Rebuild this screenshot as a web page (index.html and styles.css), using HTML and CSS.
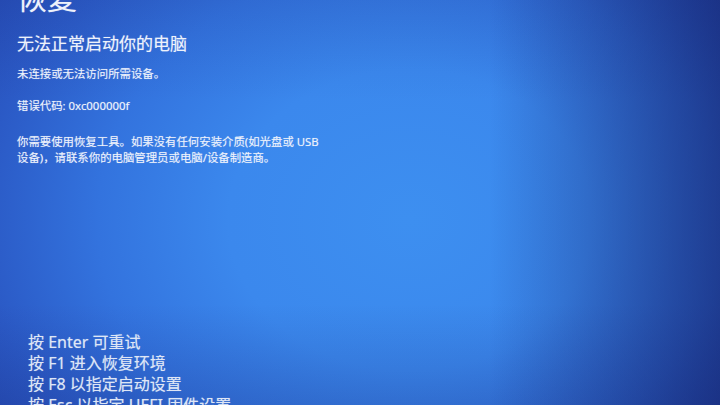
FILE: index.html
```html
<!DOCTYPE html>
<html lang="zh-CN">
<head>
<meta charset="utf-8">
<title>恢复</title>
<link rel="stylesheet" href="styles.css">
</head>
<body>
<main class="screen">
  <section class="info">
    <h1 class="title">恢复</h1>
    <h2 class="subtitle">无法正常启动你的电脑</h2>
    <p class="line">未连接或无法访问所需设备。</p>
    <p class="line code">错误代码: 0xc000000f</p>
    <p class="line para">你需要使用恢复工具。如果没有任何安装介质(如光盘或 USB<br>设备)，请联系你的电脑管理员或电脑/设备制造商。</p>
  </section>
  <ul class="keys">
    <li>按 Enter 可重试</li>
    <li>按 F1 进入恢复环境</li>
    <li>按 F8 以指定启动设置</li>
    <li>按 Esc 以指定 UEFI 固件设置</li>
  </ul>
</main>
</body>
</html>
```

FILE: styles.css
```css
html, body {
  margin: 0;
  padding: 0;
}
body {
  width: 720px;
  height: 405px;
  overflow: hidden;
  font-family: "Segoe UI", "Noto Sans", "Noto Sans CJK SC", sans-serif;
  color: #eef2fb;
  background:
    linear-gradient(to right, rgba(18, 28, 100, 0) 68%, rgba(18, 28, 100, 0.62) 100%),
    linear-gradient(to bottom, rgba(20, 30, 110, 0.1) 0%, rgba(20, 30, 110, 0) 25%, rgba(20, 30, 110, 0) 75%, rgba(20, 30, 110, 0.2) 100%),
    radial-gradient(ellipse 520px 430px at 410px 220px, #3d8ff0 0%, #3b88ed 35%, #3373de 60%, #2b5ac6 82%, #2549b2 100%);
  background-color: #2549b2;
}
.screen {
  display: flex;
  flex-direction: column;
  height: 405px;
  text-shadow: 0 0 1px rgba(230, 240, 255, 0.5);
}
.info {
  padding-left: 17px;
  display: flex;
  flex-direction: column;
}
.title {
  margin: -17px 0 0;
  font-size: 30px;
  line-height: 30px;
  font-weight: 400;
}
.subtitle {
  margin: 20px 0 0;
  font-size: 17px;
  line-height: 22px;
  font-weight: 400;
}
.line {
  margin: 11px 0 0;
  font-size: 11.4px;
  line-height: 16px;
}
.code {
  margin-top: 16px;
}
.para {
  margin-top: 20px;
}
.keys {
  list-style: none;
  margin: 166px 0 0;
  padding: 0 0 0 28px;
  font-size: 16px;
  line-height: 21px;
  color: #dfe6f5;
}
.keys li {
  white-space: nowrap;
}
```
